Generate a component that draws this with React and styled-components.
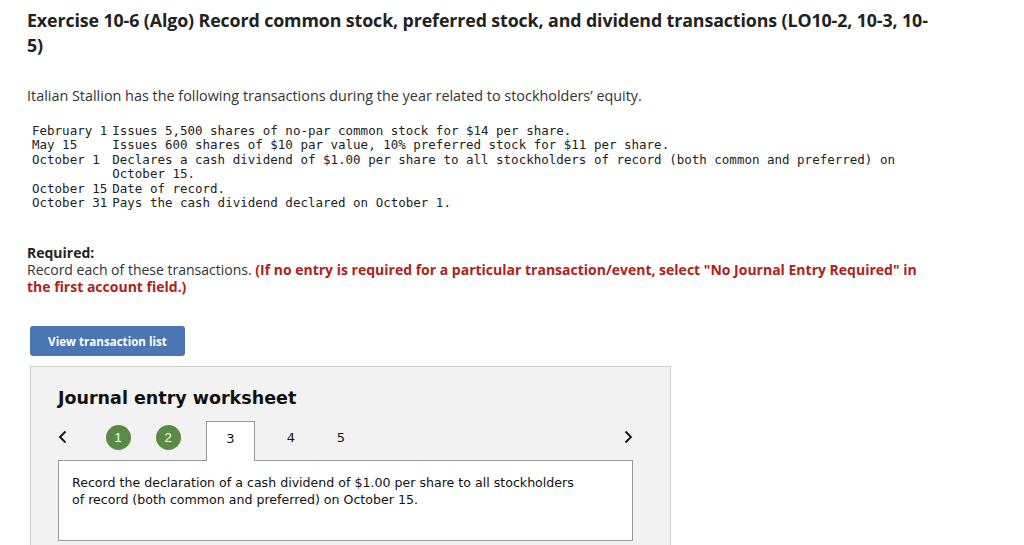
import React from "react";
import styled, { createGlobalStyle } from "styled-components";

const Global = createGlobalStyle`
  html, body { margin: 0; padding: 0; background: #fff; }
  body { font-family: "Open Sans", "Liberation Sans", sans-serif; color: #333; }
`;

const Page = styled.div`
  padding: 8px 20px 0 27px;
`;

const Title = styled.h1`
  margin: 0;
  font-size: 17.8px;
  line-height: 25px;
  font-weight: 700;
  color: #222;
  white-space: nowrap;
  letter-spacing: -0.1px;
`;

const Intro = styled.p`
  margin: 29px 0 0;
  font-size: 14.4px;
  line-height: 18px;
  color: #333;
`;

const Transactions = styled.div`
  margin: 19px 0 0 5px;
  display: grid;
  grid-template-columns: auto 1fr;
  column-gap: 5px;
  font-family: "DejaVu Sans Mono", monospace;
  font-size: 12.5px;
  line-height: 14.4px;
  color: #222;
`;

const Date = styled.div`
  white-space: nowrap;
`;

const Desc = styled.div``;

const Required = styled.div`
  margin-top: 34px;
  font-size: 14px;
  line-height: 17px;
  color: #333;
`;

const Label = styled.div`
  font-weight: 700;
  color: #222;
`;

const Warn = styled.span`
  color: #b0211b;
  font-weight: 700;
`;

const ViewButton = styled.button`
  display: block;
  margin: 31px 0 0 3px;
  width: 155px;
  height: 30px;
  border: 0;
  border-radius: 3px;
  background: #4a76b4;
  color: #fff;
  font-family: "Open Sans", "Liberation Sans", sans-serif;
  font-weight: 700;
  font-size: 11.6px;
  cursor: pointer;
`;

const Panel = styled.section`
  margin: 10px 0 0 3px;
  width: 641px;
  height: 200px;
  box-sizing: border-box;
  background: #f2f2f2;
  border: 1px solid #cfcfcf;
  padding: 19px 37px 0 27px;
  font-family: "DejaVu Sans", Verdana, sans-serif;
`;

const PanelTitle = styled.h2`
  margin: 0;
  font-size: 17.5px;
  line-height: 24px;
  font-weight: 700;
  color: #111;
`;

const TabBar = styled.div`
  display: flex;
  align-items: stretch;
  height: 39px;
  margin-top: 11px;
`;

const Arrow = styled.button`
  border: 0;
  background: transparent;
  padding: 0 0 7px;
  width: 35px;
  display: flex;
  align-items: center;
  justify-content: ${(p) => (p.$right ? "flex-end" : "flex-start")};
  color: #111;
  margin-left: ${(p) => (p.$right ? "auto" : "0")};
`;

const Tab = styled.div`
  width: 50px;
  box-sizing: border-box;
  padding-bottom: 7px;
  display: flex;
  align-items: center;
  justify-content: center;
  font-size: 13px;
  color: #111;
  ${(p) =>
    p.$active &&
    `
    width: 49px;
    margin: 0 11px 0 13px;
    padding-bottom: 6px;
    background: #fff;
    border: 1px solid #999;
    border-bottom: 0;
    height: 40px;
    position: relative;
    z-index: 1;
  `}
`;

const Done = styled.span`
  width: 25px;
  height: 25px;
  border-radius: 50%;
  background: #5a8a47;
  color: #fff;
  font-family: "Liberation Sans", Arial, sans-serif;
  font-size: 13px;
  display: flex;
  align-items: center;
  justify-content: center;
`;

const Prompt = styled.div`
  background: #fff;
  border: 1px solid #999;
  height: 81px;
  box-sizing: border-box;
  padding: 13px 13px 0;
  font-size: 12.6px;
  line-height: 17px;
  color: #111;
`;

const Chevron = ({ dir }) => (
  <svg width="9" height="14" viewBox="0 0 9 14" fill="none">
    <path
      d={dir === "left" ? "M7.5 1.5L2 7l5.5 5.5" : "M1.5 1.5L7 7l-5.5 5.5"}
      stroke="#111"
      strokeWidth="1.8"
    />
  </svg>
);

const rows = [
  ["February 1", "Issues 5,500 shares of no-par common stock for $14 per share."],
  ["May 15", "Issues 600 shares of $10 par value, 10% preferred stock for $11 per share."],
  [
    "October 1",
    <>
      Declares a cash dividend of $1.00 per share to all stockholders of record (both common and preferred) on
      <br />
      October 15.
    </>,
  ],
  ["October 15", "Date of record."],
  ["October 31", "Pays the cash dividend declared on October 1."],
];

export default function App() {
  return (
    <Page>
      <Global />
      <Title>
        Exercise 10-6 (Algo) Record common stock, preferred stock, and dividend transactions (LO10-2, 10-3, 10-
        <br />
        5)
      </Title>
      <Intro>Italian Stallion has the following transactions during the year related to stockholders’ equity.</Intro>

      <Transactions>
        {rows.map(([d, t]) => (
          <React.Fragment key={d}>
            <Date>{d}</Date>
            <Desc>{t}</Desc>
          </React.Fragment>
        ))}
      </Transactions>

      <Required>
        <Label>Required:</Label>
        Record each of these transactions.{" "}
        <Warn>
          (If no entry is required for a particular transaction/event, select "No Journal Entry Required" in
          <br />
          the first account field.)
        </Warn>
      </Required>

      <ViewButton>View transaction list</ViewButton>

      <Panel>
        <PanelTitle>Journal entry worksheet</PanelTitle>
        <TabBar>
          <Arrow aria-label="previous">
            <Chevron dir="left" />
          </Arrow>
          <Tab>
            <Done>1</Done>
          </Tab>
          <Tab>
            <Done>2</Done>
          </Tab>
          <Tab $active>3</Tab>
          <Tab>4</Tab>
          <Tab>5</Tab>
          <Arrow $right aria-label="next">
            <Chevron dir="right" />
          </Arrow>
        </TabBar>
        <Prompt>
          Record the declaration of a cash dividend of $1.00 per share to all stockholders
          <br />
          of record (both common and preferred) on October 15.
        </Prompt>
      </Panel>
    </Page>
  );
}
